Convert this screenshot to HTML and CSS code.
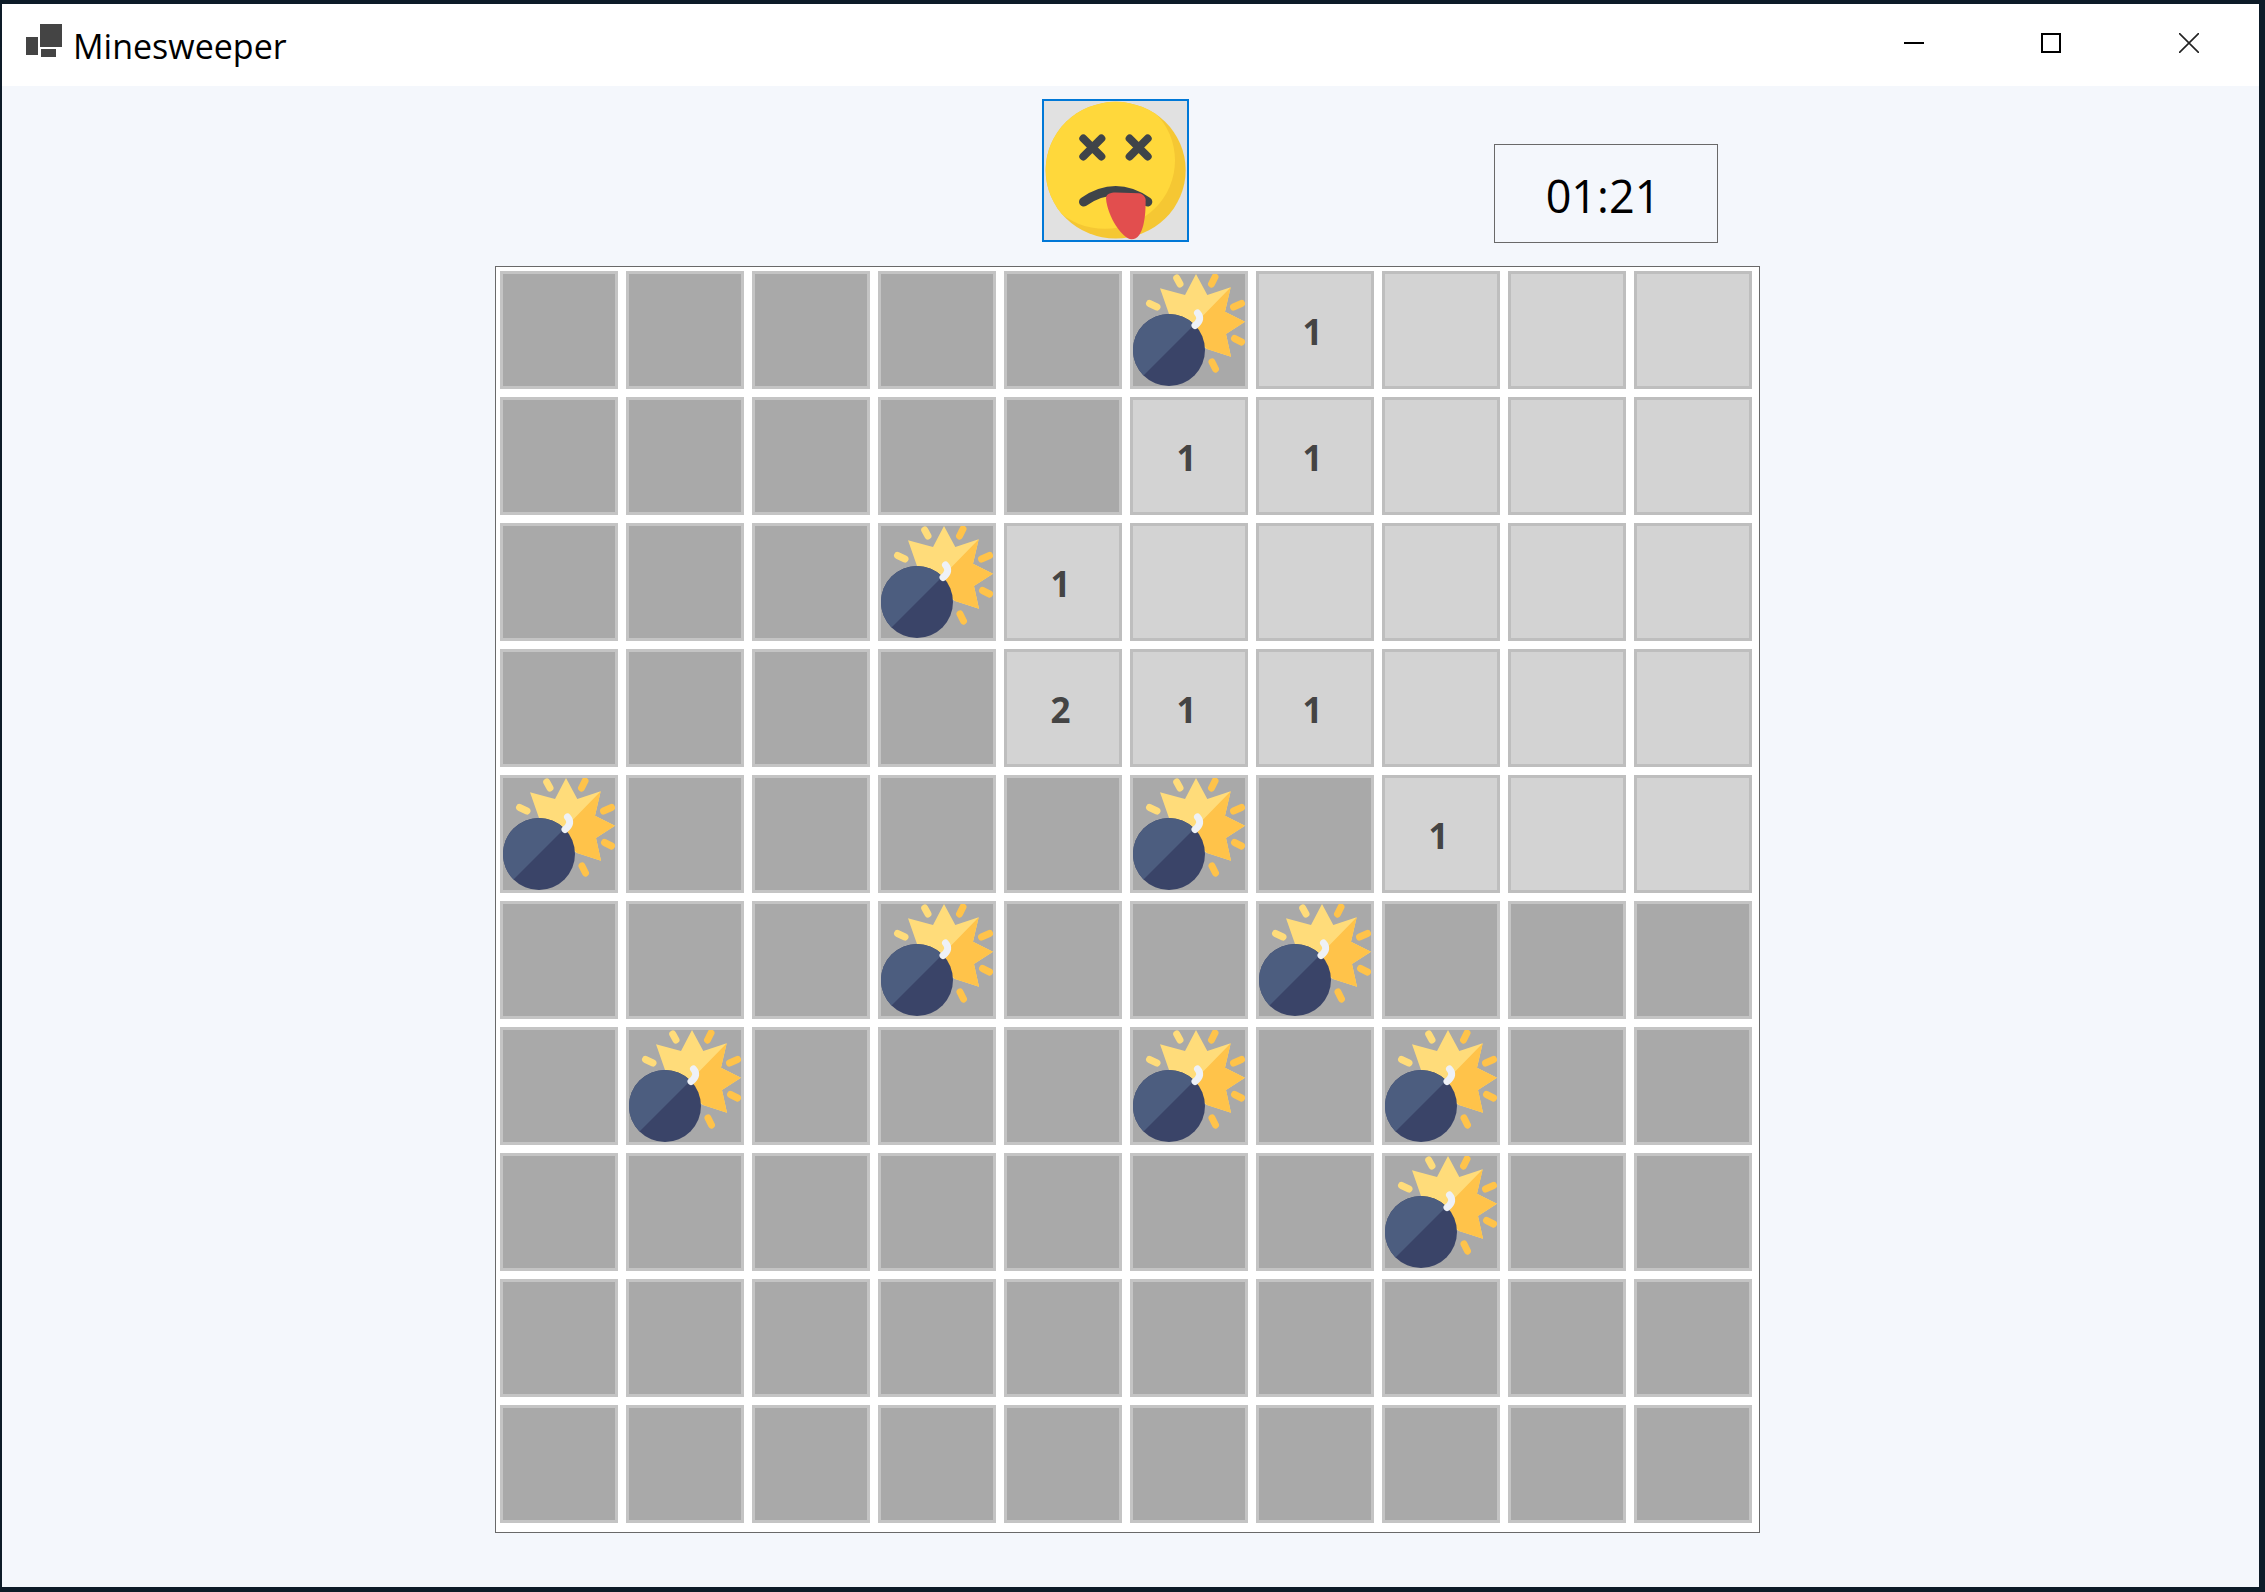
FILE: index.html
```html
<!DOCTYPE html>
<html lang="en">
<head>
<meta charset="utf-8">
<title>Minesweeper</title>
<link rel="stylesheet" href="styles.css">
</head>
<body>
<svg class="defs" width="0" height="0" aria-hidden="true">
  <defs>
    <symbol id="bomb" viewBox="0 0 112 112">
      <g fill="none" stroke-width="7" stroke-linecap="round">
        <path d="M43.700 4L47 10M16.500 29.500L24 33" stroke="#ffdc7a"/>
        <path d="M82 3L78.500 10M100.500 33L108.500 29.500M101.500 64.500L108.500 68M79 88L82.500 95" stroke="#ffc34a"/>
      </g>
      <path d="M63 0L74.300 21L97.700 13.300L92 37.700L112 47.700L93 60L98 82.700L74 75L50 62L36 40L27 14.300L52 21Z" fill="#ffdc7a"/>
      <path d="M97.700 13.300L92 37.700L112 47.700L93 60L98 82.700L74 75L56 56Z" fill="#ffc34a"/>
      <circle cx="36" cy="76" r="36" fill="#3a4468"/>
      <path d="M61.500 50.500A36 36 0 0 0 10.500 101.500Z" fill="#4c5d7f"/>
      <path d="M64.500 39C68 43 67.500 47 62 51.500" fill="none" stroke="#eef1f7" stroke-width="7" stroke-linecap="round"/>
    </symbol>
  </defs>
</svg>
<div class="window">
  <header class="titlebar">
    <svg class="app-icon" width="36" height="33" viewBox="0 0 36 33">
      <path d="M14 0H36V23H14ZM0 13H12V31H0ZM15 25H30V33H15Z" fill="#444"/>
    </svg>
    <span class="app-title">Minesweeper</span>
    <div class="controls">
      <span class="control control-min"><svg width="20" height="20" viewBox="0 0 20 20"><path d="M0 10H20" stroke="#000" stroke-width="2"/></svg></span>
      <span class="control"><svg width="20" height="20" viewBox="0 0 20 20"><path d="M1 1H19V19H1Z" fill="none" stroke="#000" stroke-width="2"/></svg></span>
      <span class="control"><svg width="20" height="20" viewBox="0 0 20 20"><path d="M0 0L20 20M20 0L0 20" stroke="#222" stroke-width="1.600"/></svg></span>
    </div>
  </header>
  <main class="content">
    <div class="status">
      <button class="face" type="button">
        <svg width="143" height="139" viewBox="0 0 429 416">
          <defs><clipPath id="face-clip"><ellipse cx="215" cy="207" rx="210" ry="205"/></clipPath></defs>
          <ellipse cx="215" cy="207" rx="210" ry="205" fill="#f5c733"/>
          <ellipse cx="183" cy="178" rx="210" ry="205" fill="#ffd83b" clip-path="url(#face-clip)"/>
          <path d="M118 112L172 166M172 112L118 166M257 112L311 166M311 112L257 166" stroke="#3f4449" stroke-width="24" stroke-linecap="round"/>
          <path d="M119 302Q215 236 311 302" fill="none" stroke="#3f4449" stroke-width="28" stroke-linecap="round"/>
          <path d="M186 292C186 278 200 274 215 274L285 276C298 278 305 288 305 297C305 340 300 414 263 414C235 414 190 345 186 292Z" fill="#e24e4e"/>
        </svg>
      </button>
      <div class="timer">01:21</div>
    </div>
    <div class="board">
      <div class="cell"></div><div class="cell"></div><div class="cell"></div><div class="cell"></div><div class="cell"></div><div class="cell"><svg class="bomb"><use href="#bomb"/></svg></div><div class="cell open">1</div><div class="cell open"></div><div class="cell open"></div><div class="cell open"></div>
      <div class="cell"></div><div class="cell"></div><div class="cell"></div><div class="cell"></div><div class="cell"></div><div class="cell open">1</div><div class="cell open">1</div><div class="cell open"></div><div class="cell open"></div><div class="cell open"></div>
      <div class="cell"></div><div class="cell"></div><div class="cell"></div><div class="cell"><svg class="bomb"><use href="#bomb"/></svg></div><div class="cell open">1</div><div class="cell open"></div><div class="cell open"></div><div class="cell open"></div><div class="cell open"></div><div class="cell open"></div>
      <div class="cell"></div><div class="cell"></div><div class="cell"></div><div class="cell"></div><div class="cell open">2</div><div class="cell open">1</div><div class="cell open">1</div><div class="cell open"></div><div class="cell open"></div><div class="cell open"></div>
      <div class="cell"><svg class="bomb"><use href="#bomb"/></svg></div><div class="cell"></div><div class="cell"></div><div class="cell"></div><div class="cell"></div><div class="cell"><svg class="bomb"><use href="#bomb"/></svg></div><div class="cell"></div><div class="cell open">1</div><div class="cell open"></div><div class="cell open"></div>
      <div class="cell"></div><div class="cell"></div><div class="cell"></div><div class="cell"><svg class="bomb"><use href="#bomb"/></svg></div><div class="cell"></div><div class="cell"></div><div class="cell"><svg class="bomb"><use href="#bomb"/></svg></div><div class="cell"></div><div class="cell"></div><div class="cell"></div>
      <div class="cell"></div><div class="cell"><svg class="bomb"><use href="#bomb"/></svg></div><div class="cell"></div><div class="cell"></div><div class="cell"></div><div class="cell"><svg class="bomb"><use href="#bomb"/></svg></div><div class="cell"></div><div class="cell"><svg class="bomb"><use href="#bomb"/></svg></div><div class="cell"></div><div class="cell"></div>
      <div class="cell"></div><div class="cell"></div><div class="cell"></div><div class="cell"></div><div class="cell"></div><div class="cell"></div><div class="cell"></div><div class="cell"><svg class="bomb"><use href="#bomb"/></svg></div><div class="cell"></div><div class="cell"></div>
      <div class="cell"></div><div class="cell"></div><div class="cell"></div><div class="cell"></div><div class="cell"></div><div class="cell"></div><div class="cell"></div><div class="cell"></div><div class="cell"></div><div class="cell"></div>
      <div class="cell"></div><div class="cell"></div><div class="cell"></div><div class="cell"></div><div class="cell"></div><div class="cell"></div><div class="cell"></div><div class="cell"></div><div class="cell"></div><div class="cell"></div>
    </div>
  </main>
</div>
</body>
</html>
```
FILE: styles.css
```css
* {
  box-sizing: border-box;
}

html,
body {
  margin: 0;
  height: 1592px;
  overflow: hidden;
}

body {
  display: flex;
  padding: 4px 6px 5px 2px;
  background: #0d1b28;
  font-family: "Open Sans", "Noto Sans", sans-serif;
}

.defs {
  position: absolute;
}

.window {
  flex: 1;
  display: flex;
  flex-direction: column;
  background: #f4f7fc;
}

.titlebar {
  flex: none;
  height: 82px;
  display: flex;
  align-items: flex-start;
  padding: 20px 1px 0 24px;
  background: #fff;
}

.app-icon {
  flex: none;
}

.app-title {
  margin: 0 0 0 11px;
  font-size: 34px;
  line-height: 44px;
  color: #000;
}

.controls {
  display: flex;
  margin: -20px 0 0 auto;
}

.control {
  width: 138px;
  height: 78px;
  display: flex;
  align-items: center;
  justify-content: center;
}

.control-min {
  width: 136px;
}

.content {
  flex: 1;
  padding: 13px 0 0 493px;
}

.status {
  display: flex;
  align-items: flex-start;
  height: 167px;
  padding-left: 547px;
}

.face {
  width: 147px;
  height: 143px;
  padding: 0;
  display: block;
  border: 2px solid #0078d7;
  background: #e1e1e1;
}

.face svg {
  display: block;
}

.timer {
  width: 224px;
  height: 99px;
  margin: 45px 0 0 305px;
  padding: 3px 6px 0 0;
  display: flex;
  align-items: center;
  justify-content: center;
  border: 1px solid #696969;
  font-size: 45px;
  color: #000;
}

.board {
  width: 1265px;
  display: grid;
  grid-template-columns: repeat(10, 118px);
  grid-auto-rows: 118px;
  gap: 8px;
  padding: 4px 7px 9px 4px;
  border: 1px solid #696969;
  background: #fff;
}

.cell {
  overflow: hidden;
  display: flex;
  align-items: center;
  justify-content: center;
  padding: 2px 5px 0 0;
  border: 3px solid #c4c4c4;
  background: #a9a9a9;
  font-size: 35px;
  font-weight: 700;
  color: #444;
}

.open {
  border-color: #bebebe;
  background: #d3d3d3;
}

.bomb {
  flex: none;
  width: 112px;
  height: 112px;
  margin: -2px -5px 0 0;
}
```
